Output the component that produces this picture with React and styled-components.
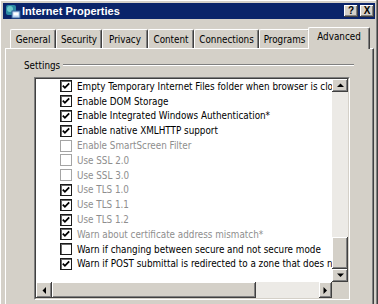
import React from 'react';
import styled, { createGlobalStyle } from 'styled-components';

const GlobalStyle = createGlobalStyle`
  html, body {
    margin: 0;
    padding: 0;
    background: #d4d0c8;
  }
  body {
    font-family: "DejaVu Sans Condensed", "Liberation Sans", sans-serif;
    font-size: 9.8px;
    color: #000;
  }
`;

const Window = styled.div`
  width: 378px;
  height: 304px;
  box-sizing: border-box;
  padding: 3px 3px 0 3px;
  background: #d4d0c8;
  overflow: hidden;
  display: flex;
  flex-direction: column;
  box-shadow: inset -1px 0 #404040, inset -2px 0 #808080, inset 1px 1px #ffffff;
`;

const TitleBar = styled.div`
  height: 16px;
  flex: none;
  display: flex;
  align-items: center;
  padding: 0 1px 0 2px;
  background: #0a246a;
`;

const TitleText = styled.span`
  margin-left: 1px;
  color: #fff;
  font-family: "Liberation Sans", sans-serif;
  font-weight: bold;
  font-size: 11px;
`;

const CaptionButtons = styled.div`
  margin-left: auto;
  display: flex;
  gap: 2px;
`;

const CaptionButton = styled.div`
  width: 14px;
  height: 12px;
  box-sizing: border-box;
  background: #d4d0c8;
  display: flex;
  align-items: center;
  justify-content: center;
  box-shadow: inset -1px -1px #404040, inset 1px 1px #ffffff, inset -2px -2px #808080;
  font-family: "Liberation Sans", sans-serif;
  font-weight: bold;
  font-size: 10px;
  line-height: 1;
`;

const TabStrip = styled.div`
  margin-top: 8px;
  height: 21px;
  flex: none;
  display: flex;
  align-items: flex-end;
  padding-left: 7px;
  position: relative;
  z-index: 1;
`;

const Tab = styled.div`
  width: ${p => p.$w + (p.$active ? 4 : 0)}px;
  height: ${p => (p.$active ? 22 : 19)}px;
  margin: ${p => (p.$active ? '0 -2px -1px -2px' : '0')};
  box-sizing: border-box;
  background: #d4d0c8;
  border-top: 1px solid #ffffff;
  border-left: 1px solid #ffffff;
  border-right: 1px solid #404040;
  border-radius: 2px 2px 0 0;
  box-shadow: inset -1px 0 #808080;
  display: flex;
  align-items: ${p => (p.$active ? 'flex-start' : 'center')};
  padding-top: ${p => (p.$active ? '3px' : '0')};
  justify-content: center;
  white-space: nowrap;
`;

const Panel = styled.div`
  flex: 1;
  margin: 0 1px 0 2px;
  border-top: 1px solid #ffffff;
  border-left: 1px solid #ffffff;
  border-right: 1px solid #404040;
  box-shadow: inset -1px 0 #808080;
  display: flex;
  flex-direction: column;
`;

const GroupHeader = styled.div`
  margin: 10px 19px 0 18px;
  height: 12px;
  display: flex;
  align-items: center;
`;

const GroupLine = styled.div`
  flex: 1;
  margin-left: 3px;
  border-top: 1px solid #808080;
  border-bottom: 1px solid #ffffff;
`;

const ListOuter = styled.div`
  margin: 6px 0 0 28px;
  width: 316px;
  height: 223px;
  box-sizing: border-box;
  border: 1px solid;
  border-color: #808080 #ffffff #ffffff #808080;
`;

const ListInner = styled.div`
  height: 100%;
  box-sizing: border-box;
  border: 1px solid;
  border-color: #404040 #d4d0c8 #d4d0c8 #404040;
  background: #fff;
  display: grid;
  grid-template-columns: 1fr 16px;
  grid-template-rows: 1fr 16px;
`;

const Items = styled.div`
  overflow: hidden;
`;

const Row = styled.div`
  height: 14.8px;
  display: flex;
  align-items: center;
  padding-left: 24px;
  white-space: nowrap;
  color: ${p => (p.$dim ? '#8e8e8e' : '#000')};
`;

const Box = styled.span`
  flex: none;
  width: 12px;
  height: 12px;
  box-sizing: border-box;
  margin-right: 5px;
  background: #fff;
  border: 1px solid ${p => (p.$faded ? '#a4a4a4' : '#1a1a1a')};
  box-shadow: ${p => (p.$faded ? 'none' : 'inset 1px 1px #6a6a6a')};
  display: flex;
`;

const VScroll = styled.div`
  display: flex;
  flex-direction: column;
  background: #eceae6;
`;

const HScroll = styled.div`
  display: flex;
  background: #eceae6;
`;

const Track = styled.div`
  flex: 1;
`;

const ScrollPart = styled.div`
  flex: none;
  width: ${p => p.$w || 16}px;
  height: ${p => p.$h || 16}px;
  box-sizing: border-box;
  background: #d4d0c8;
  box-shadow: inset -1px -1px #404040, inset 1px 1px #ffffff, inset -2px -2px #808080;
  display: flex;
  align-items: center;
  justify-content: center;
`;

const Corner = styled.div`
  background: #d4d0c8;
`;

const Check = () => (
  <svg width="10" height="10" viewBox="0 0 10 10">
    <path d="M1.8 4.6 L3.9 6.8 L8.2 2.3" fill="none" stroke="#000" strokeWidth="1.8" />
  </svg>
);

const Arrow = ({ dir }) => {
  const pts = {
    up: '0,4 7,4 3.5,0.5',
    down: '0,0.5 7,0.5 3.5,4',
    left: '4,0 4,7 0.5,3.5',
    right: '0.5,0 0.5,7 4,3.5',
  }[dir];
  const vert = dir === 'up' || dir === 'down';
  return (
    <svg width={vert ? 7 : 4.5} height={vert ? 4.5 : 7} viewBox={vert ? '0 0 7 4.5' : '0 0 4.5 7'}>
      <polygon points={pts} fill="#000" />
    </svg>
  );
};

const AppIcon = () => (
  <svg width="16" height="16" viewBox="0 0 16 16">
    <rect x="1" y="2" width="10" height="10" rx="2" fill="#2b8aa3" />
    <circle cx="5" cy="6" r="3" fill="#6cc7c9" />
    <rect x="7" y="8" width="8" height="7" fill="#b9d3ee" stroke="#36629c" strokeWidth="1" />
    <rect x="8.5" y="9.5" width="5" height="3" fill="#ffffff" />
  </svg>
);

const tabs = [
  ['General', 46],
  ['Security', 46],
  ['Privacy', 46],
  ['Content', 46],
  ['Connections', 65],
  ['Programs', 51],
  ['Advanced', 58, true],
];

const items = [
  ['Empty Temporary Internet Files folder when browser is closed', true, false],
  ['Enable DOM Storage', true, false],
  ['Enable Integrated Windows Authentication*', true, false],
  ['Enable native XMLHTTP support', true, false],
  ['Enable SmartScreen Filter', false, true],
  ['Use SSL 2.0', false, true],
  ['Use SSL 3.0', false, true],
  ['Use TLS 1.0', true, true],
  ['Use TLS 1.1', true, true],
  ['Use TLS 1.2', true, true],
  ['Warn about certificate address mismatch*', true, true],
  ['Warn if changing between secure and not secure mode', false, false],
  ['Warn if POST submittal is redirected to a zone that does not permit posts', true, false],
];

export default function App() {
  return (
    <>
      <GlobalStyle />
      <Window>
        <TitleBar>
          <AppIcon />
          <TitleText>Internet Properties</TitleText>
          <CaptionButtons>
            <CaptionButton>?</CaptionButton>
            <CaptionButton>X</CaptionButton>
          </CaptionButtons>
        </TitleBar>

        <TabStrip>
          {tabs.map(([label, w, active]) => (
            <Tab key={label} $w={w} $active={active}>{label}</Tab>
          ))}
        </TabStrip>

        <Panel>
          <GroupHeader>
            <span>Settings</span>
            <GroupLine />
          </GroupHeader>

          <ListOuter>
            <ListInner>
              <Items>
                {items.map(([text, checked, dim]) => (
                  <Row key={text} $dim={dim}>
                    <Box $faded={dim && !checked}>{checked && <Check />}</Box>
                    {text}
                  </Row>
                ))}
              </Items>
              <VScroll>
                <ScrollPart $h={13}><Arrow dir="up" /></ScrollPart>
                <Track />
                <ScrollPart $h={32} />
                <ScrollPart $h={13}><Arrow dir="down" /></ScrollPart>
              </VScroll>
              <HScroll>
                <ScrollPart><Arrow dir="left" /></ScrollPart>
                <ScrollPart $w={204} />
                <Track />
                <ScrollPart $w={13}><Arrow dir="right" /></ScrollPart>
              </HScroll>
              <Corner />
            </ListInner>
          </ListOuter>
        </Panel>
      </Window>
    </>
  );
}
